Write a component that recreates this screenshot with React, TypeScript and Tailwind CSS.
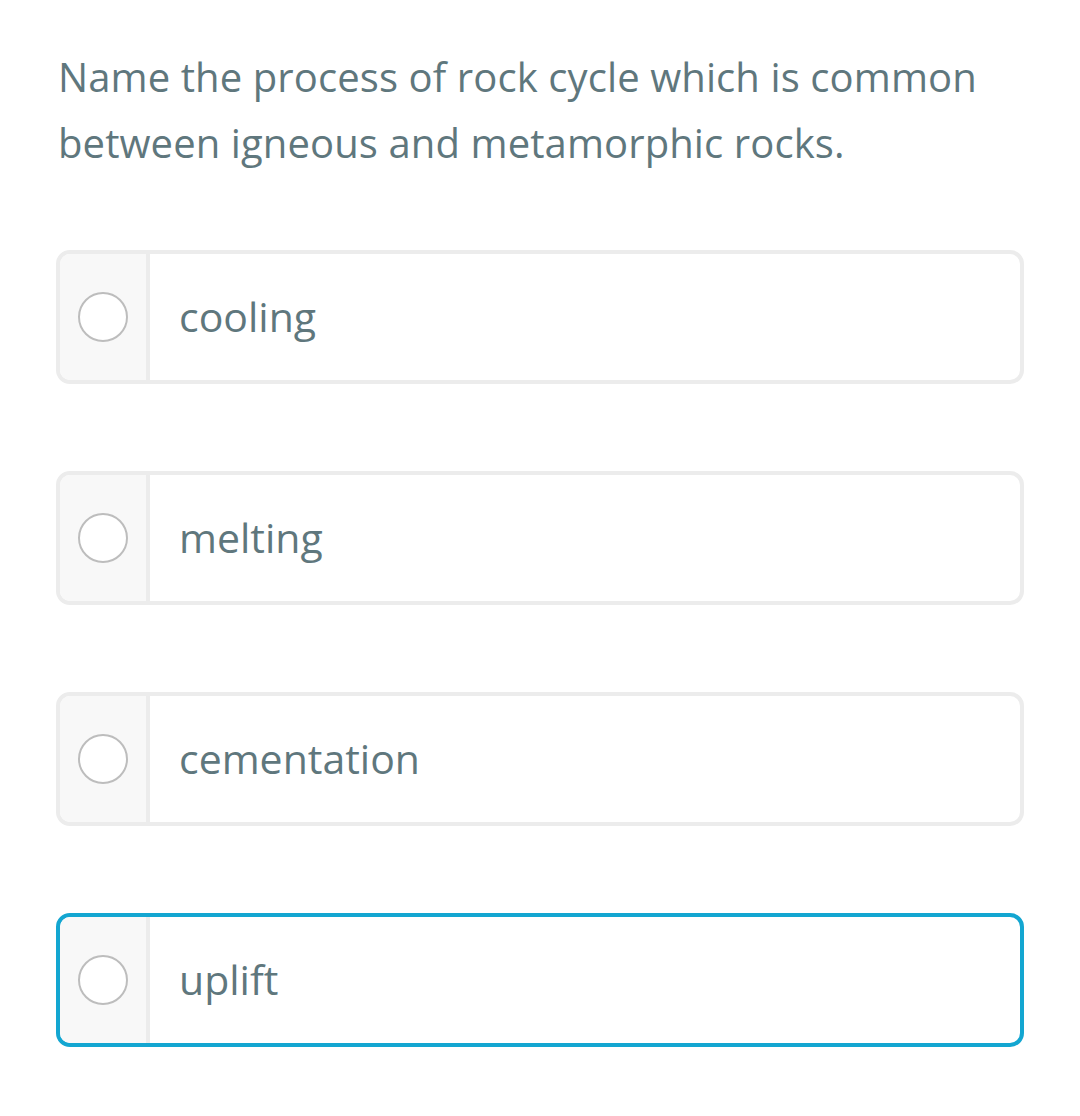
const options = ['cooling', 'melting', 'cementation', 'uplift']

export default function App() {
  const selected = 3
  return (
    <div
      className="min-h-[1116px] w-[1080px] bg-white px-[56px] pt-[44px] text-[#5f777d]"
      style={{ fontFamily: '"Open Sans", "Noto Sans", sans-serif' }}
    >
      <p className="pl-[2px] text-[40px] leading-[66px] tracking-[0.1px]">
        Name the process of rock cycle which is common between igneous and metamorphic rocks.
      </p>
      <div className="mt-[74px] flex flex-col gap-[87px]">
        {options.map((opt, i) => (
          <div
            key={opt}
            className={`flex h-[134px] overflow-hidden rounded-[14px] border-4 ${
              i === selected ? 'border-[#13a6d1]' : 'border-[#ececec]'
            }`}
          >
            <div className="flex w-[90px] shrink-0 items-center justify-center border-r-4 border-[#ececec] bg-[#f8f8f8]">
              <span className="block h-[50px] w-[50px] rounded-full border-2 border-[#bdbdbd] bg-white" />
            </div>
            <div className="flex items-center pl-[29px] text-[41px]">{opt}</div>
          </div>
        ))}
      </div>
    </div>
  )
}
